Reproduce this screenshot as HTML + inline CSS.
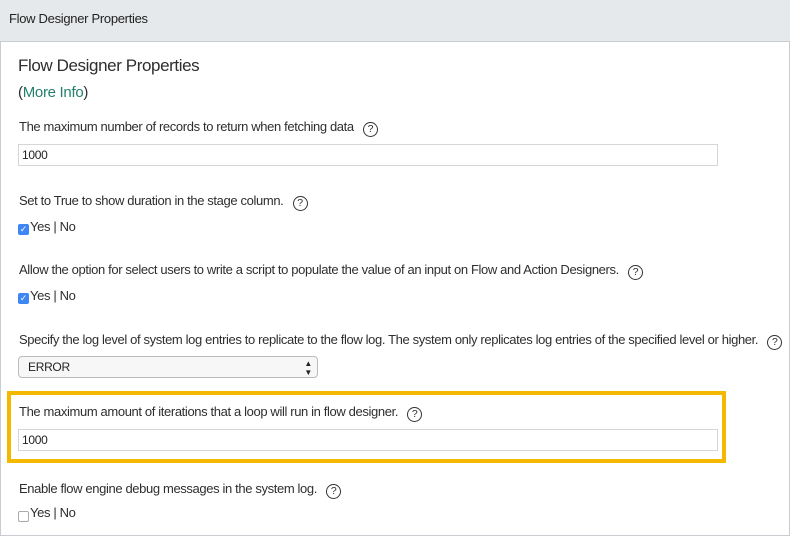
<!DOCTYPE html>
<html><head><meta charset="utf-8"><style>
*{margin:0;padding:0;box-sizing:border-box}
body{width:792px;height:538px;background:#fff;font-family:"Liberation Sans",sans-serif;color:#2e2e2e;position:relative;overflow:hidden}
.frame{position:absolute;left:0;top:0;width:790px;height:536px;border:1px solid #c9ccd0;border-top:none}
.hdr{position:absolute;left:0;top:0;width:790px;height:42px;background:#e6e9ec;border-bottom:1px solid #c9ccd0}
.t{position:absolute;white-space:nowrap;font-size:13px;letter-spacing:-0.37px;line-height:16px}
.q{display:inline-block;width:15px;height:15px;border:1.2px solid #333;border-radius:50%;font-size:10.5px;text-align:center;line-height:12.5px;letter-spacing:0;vertical-align:-1px;margin-left:6px}
.inp{position:absolute;border:1px solid #d4d6d9;height:22px;font-size:12px;line-height:20px;padding-left:3px;letter-spacing:-0.3px;color:#222}
.cb{position:absolute;width:11px;height:11px;border-radius:2px;color:#fff;font-size:9px;line-height:11px;text-align:center;letter-spacing:0}
.on{background:#3e86f5}
.off{border:1px solid #aaa;background:#fff}
</style></head><body>
<div class="frame"></div>
<div class="hdr"></div>
<div class="t" style="left:9px;top:11px;font-size:13px;letter-spacing:-0.3px;color:#222">Flow Designer Properties</div>
<div class="t" style="left:18px;top:56px;font-size:17px;line-height:20px;letter-spacing:-0.4px">Flow Designer Properties</div>
<div class="t" style="left:18px;top:84px;font-size:15px;line-height:18px;letter-spacing:-0.3px">(<span style="color:#24806d">More Info</span>)</div>

<div class="t" style="left:19px;top:119px">The maximum number of records to return when fetching data <span class="q">?</span></div>
<div class="inp" style="left:18px;top:144px;width:700px">1000</div>

<div class="t" style="left:19px;top:193px">Set to True to show duration in the stage column. <span class="q">?</span></div>
<div class="cb on" style="left:18px;top:224px">✓</div>
<div class="t" style="left:30px;top:219px">Yes | No</div>

<div class="t" style="left:19px;top:262px">Allow the option for select users to write a script to populate the value of an input on Flow and Action Designers. <span class="q">?</span></div>
<div class="cb on" style="left:18px;top:293px">✓</div>
<div class="t" style="left:30px;top:288px">Yes | No</div>

<div class="t" style="left:19px;top:332px">Specify the log level of system log entries to replicate to the flow log. The system only replicates log entries of the specified level or higher. <span class="q">?</span></div>
<div class="inp" style="left:18px;top:356px;width:300px;border-radius:4px;border-color:#bbb;background:#f7f7f7;padding-left:9px">ERROR<span style="position:absolute;right:5px;top:0;font-size:8px;line-height:9px;top:2px">▲<br>▼</span></div>

<div style="position:absolute;left:7px;top:391px;width:719px;height:72px;border:4px solid #f5b800"></div>
<div class="t" style="left:19px;top:404px">The maximum amount of iterations that a loop will run in flow designer. <span class="q">?</span></div>
<div class="inp" style="left:18px;top:429px;width:700px">1000</div>

<div class="t" style="left:19px;top:481px">Enable flow engine debug messages in the system log. <span class="q">?</span></div>
<div class="cb off" style="left:18px;top:511px"></div>
<div class="t" style="left:30px;top:505px">Yes | No</div>
</body></html>
